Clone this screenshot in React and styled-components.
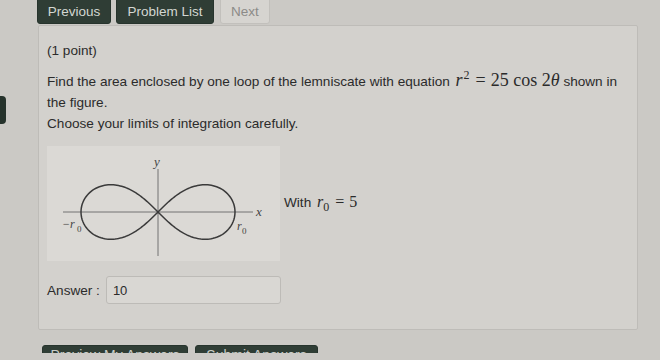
import styled, { createGlobalStyle } from 'styled-components';

const GlobalStyle = createGlobalStyle`
  html, body {
    margin: 0;
    padding: 0;
    background: #cbc9c5;
    font-family: "Liberation Sans", Arial, sans-serif;
    color: #2b2b2b;
    overflow: hidden;
  }
`;

const Page = styled.div`
  position: relative;
  width: 660px;
  height: 360px;
  padding-left: 37px;
  box-sizing: border-box;
`;

const SideTab = styled.div`
  position: absolute;
  left: -6px;
  top: 103px;
  width: 12px;
  height: 28px;
  border-radius: 4px;
  background: #26332c;
`;

const Toolbar = styled.div`
  display: flex;
  gap: 5px;
  margin-top: -7px;
  height: 31px;
`;

const NavButton = styled.button`
  font-family: "Liberation Sans", Arial, sans-serif;
  font-size: 13.5px;
  height: 31px;
  width: ${p => p.$w}px;
  padding: 6px 0 0;
  border-radius: 3px;
  border: 1px solid ${p => (p.$disabled ? '#c2c0bc' : '#27342d')};
  background: ${p => (p.$disabled ? '#d6d4d0' : '#2f3d35')};
  color: ${p => (p.$disabled ? '#8c8b88' : '#d3d7d2')};
  margin-left: ${p => p.$shift || 0}px;
`;

const Panel = styled.div`
  margin-top: 1px;
  margin-left: 1px;
  width: 600px;
  height: 305px;
  box-sizing: border-box;
  background: #d3d1cd;
  border: 1px solid #bebcb8;
  border-radius: 2px;
  padding: 15px 8px 0;
  font-size: 13.6px;
`;

const Points = styled.div`
  line-height: 20px;
  margin-bottom: 10px;
`;

const Problem = styled.div`
  line-height: 21px;
`;

const MathText = styled.span`
  font-family: "Liberation Serif", "Times New Roman", serif;
  font-size: ${p => p.$size || 18}px;
  line-height: 0;
  margin-left: 2px;
  i { font-style: italic; }
  sup { font-size: 12px; vertical-align: 7px; line-height: 0; margin-left: 1px; }
  sub { font-size: 12px; vertical-align: -4px; line-height: 0; }
`;

const Op = styled.span`
  margin: 0 5px 0 6px;
`;

const FigureRow = styled.div`
  display: flex;
  align-items: center;
  margin-top: 12px;
  gap: 4px;
`;

const Figure = styled.svg`
  display: block;
  background: #dbd9d5;
`;

const Caption = styled.div`
  margin-top: -2px;
`;

const AnswerRow = styled.div`
  display: flex;
  align-items: center;
  gap: 6px;
  margin-top: 15px;
`;

const AnswerInput = styled.div`
  width: 175px;
  height: 28px;
  box-sizing: border-box;
  border: 1px solid #bdbbb7;
  border-radius: 3px;
  background: #d9d7d3;
  padding: 6px 6px;
  font-size: 13px;
`;

const BottomBar = styled.div`
  display: flex;
  gap: 7px;
  margin-top: 15px;
  margin-left: 5px;
`;

const ActionButton = styled.button`
  font-family: "Liberation Sans", Arial, sans-serif;
  font-size: 14px;
  line-height: 16px;
  height: 30px;
  width: ${p => p.$w}px;
  display: flex;
  justify-content: center;
  align-items: flex-start;
  padding: 1px 0 0;
  border-radius: 3px;
  border: 1px solid #27342d;
  background: #2f3d35;
  color: #c9cdc8;
`;

function lemniscatePath(cx, cy, a) {
  const pts = [];
  for (let i = 0; i <= 240; i++) {
    const t = (i / 240) * 2 * Math.PI;
    const s = Math.sin(t);
    const d = 1 + s * s;
    const x = cx + (a * Math.cos(t)) / d;
    const y = cy - (a * s * Math.cos(t)) / d;
    pts.push(`${i === 0 ? 'M' : 'L'}${x.toFixed(2)} ${y.toFixed(2)}`);
  }
  return pts.join(' ') + ' Z';
}

const serif = 'Liberation Serif, serif';

function Lemniscate() {
  const cx = 111;
  const cy = 66;
  return (
    <Figure width="233" height="115" viewBox="0 0 233 115">
      <line x1="16" y1={cy} x2="206" y2={cy} stroke="#666" strokeWidth="0.9" />
      <line x1={cx} y1="23" x2={cx} y2="110" stroke="#666" strokeWidth="0.9" />
      <path d={lemniscatePath(cx, cy, 77)} fill="none" stroke="#3a3a3a" strokeWidth="1.5" />
      <text x={cx - 4} y="20" fontFamily={serif} fontStyle="italic" fontSize="13" fill="#444">y</text>
      <text x="209" y="70" fontFamily={serif} fontStyle="italic" fontSize="13" fill="#444">x</text>
      <text x="15" y="82" fontFamily={serif} fontStyle="italic" fontSize="12" fill="#444">−r</text>
      <text x="30" y="86" fontFamily={serif} fontSize="9" fill="#444">0</text>
      <text x="190" y="84" fontFamily={serif} fontStyle="italic" fontSize="12" fill="#444">r</text>
      <text x="195" y="88" fontFamily={serif} fontSize="9" fill="#444">0</text>
    </Figure>
  );
}

export default function App() {
  return (
    <Page>
      <GlobalStyle />
      <SideTab />
      <Toolbar>
        <NavButton $w={74}>Previous</NavButton>
        <NavButton $w={98}>Problem List</NavButton>
        <NavButton $w={50} $disabled $shift={1}>Next</NavButton>
      </Toolbar>
      <Panel>
        <Points>(1 point)</Points>
        <Problem>
          Find the area enclosed by one loop of the lemniscate with equation{' '}
          <MathText>
            <i>r</i>
            <sup>2</sup>
            <Op>=</Op>25 cos 2<i>θ</i>
          </MathText>{' '}
          shown in
          <br />
          the figure.
          <br />
          Choose your limits of integration carefully.
        </Problem>
        <FigureRow>
          <Lemniscate />
          <Caption>
            With{' '}
            <MathText $size={16}>
              <i>r</i>
              <sub>0</sub>
              <Op>=</Op>5
            </MathText>
          </Caption>
        </FigureRow>
        <AnswerRow>
          <span>Answer :</span>
          <AnswerInput>10</AnswerInput>
        </AnswerRow>
      </Panel>
      <BottomBar>
        <ActionButton $w={146}>Preview My Answers</ActionButton>
        <ActionButton $w={123}>Submit Answers</ActionButton>
      </BottomBar>
    </Page>
  );
}
